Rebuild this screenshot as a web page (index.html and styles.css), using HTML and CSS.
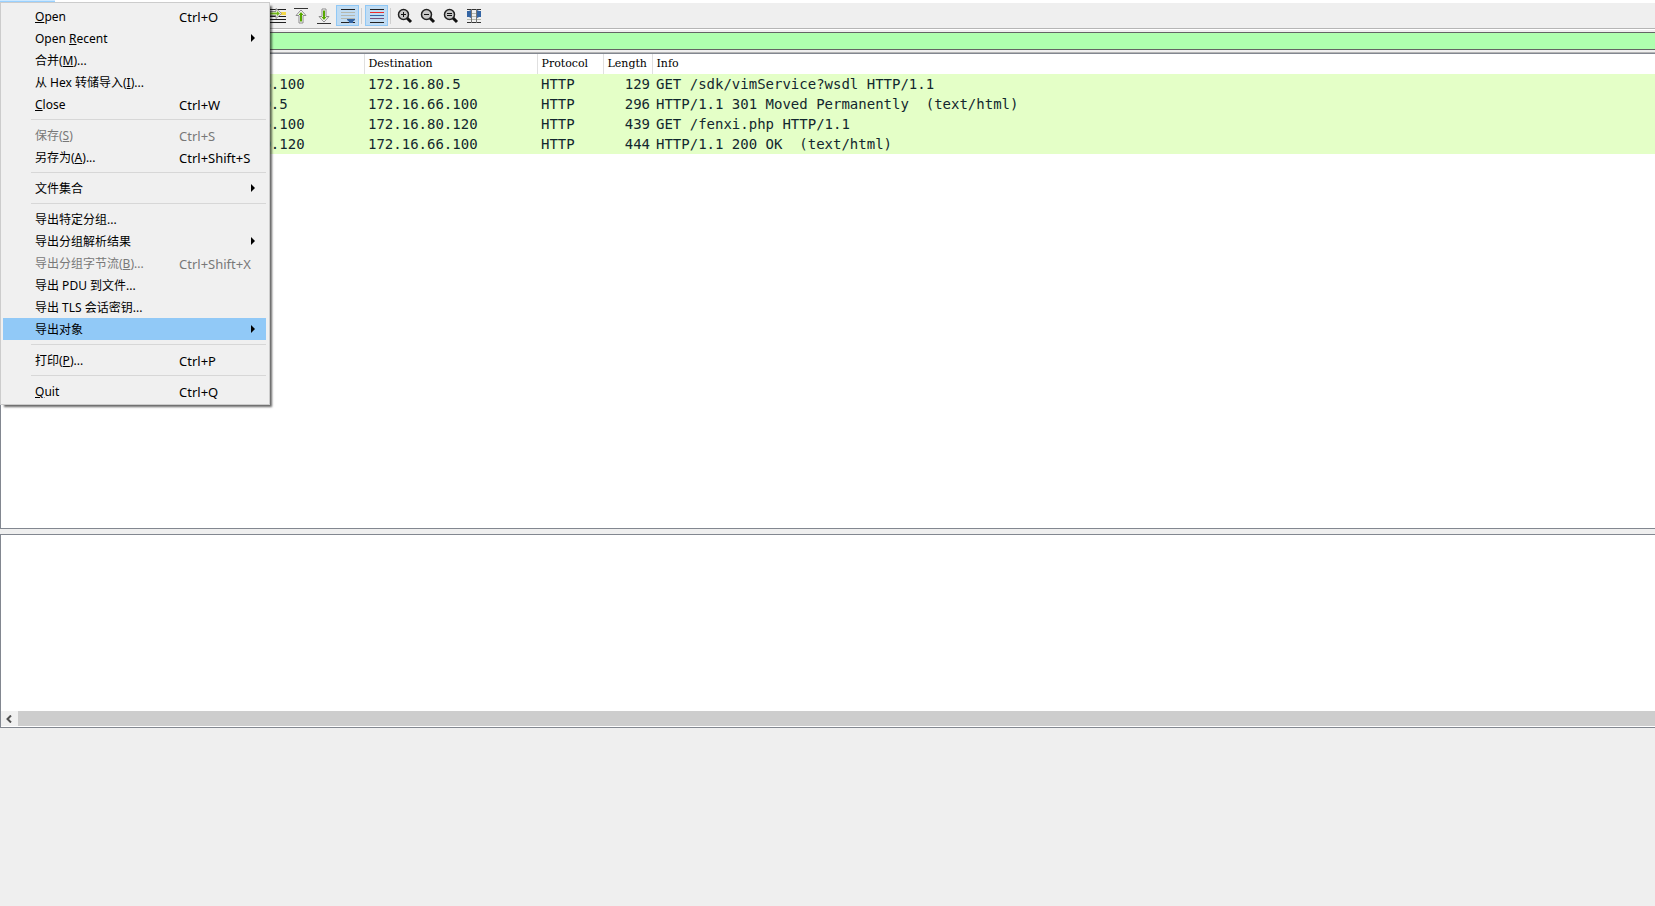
FILE: index.html
```
<!DOCTYPE html>
<html lang="zh-CN">
<head>
    <meta charset="UTF-8">
    <meta name="viewport" content="width=device-width, initial-scale=1.0">
    <title>Packet Capture</title>
    <link rel="stylesheet" href="styles.css">
</head>
<body>
    <header class="menubar">
        <button class="menubar-item" type="button" aria-label="File"></button>
    </header>

    <div class="toolbar">
        <button class="tool" type="button" aria-label="Go to packet">
            <svg width="16" height="16" viewBox="0 0 16 16"><path d="M0 1.500h16M0 11.500h16M0 14.500h16" stroke="#222"/><path d="M10 5.500h6" stroke="#f5d94a" stroke-width="3"/><path d="M0 8.500h16" stroke="#222"/><path d="M0 3.500h6V.5L11.500 5.500 6 10.500v-3H0z" fill="#fff" stroke="#8b8b8b"/><path d="M0 4.500h7V3l3 2.500L7 8V6.500H0z" fill="#73b71b"/></svg>
        </button>
        <button class="tool" type="button" aria-label="First packet">
            <svg width="16" height="16" viewBox="0 0 16 16"><path d="M1 .5h14" stroke="#333"/><path d="M8 2l5 5.500h-3V15H6V7.500H3z" fill="#fff" stroke="#8b8b8b"/><path d="M8 4l2.500 3H9v6.500H7V7H5.500z" fill="#57a800"/></svg>
        </button>
        <button class="tool" type="button" aria-label="Last packet">
            <svg width="16" height="16" viewBox="0 0 16 16"><path d="M1 15.500h14" stroke="#333"/><path d="M8 14l5-5.500h-3V1H6v7.500H3z" fill="#fff" stroke="#8b8b8b"/><path d="M8 12l2.500-3H9V2.500H7V9H5.500z" fill="#57a800"/></svg>
        </button>
        <button class="tool active" type="button" aria-label="Auto scroll">
            <svg width="16" height="16" viewBox="0 0 16 16"><path d="M1 1.500h14M1 14.500h14" stroke="#222"/><path d="M1 4.500h14M1 7.500h14M1 10.500h14" stroke="#b5b8ae"/><path d="M7 11h8v1l-2 1.500V15H9v-1.500L7 12z" fill="#3465a4"/></svg>
        </button>
        <span class="tool-divider"></span>
        <button class="tool active" type="button" aria-label="Colorize">
            <svg width="16" height="16" viewBox="0 0 16 16"><path d="M1 1.500h14M1 14.500h14" stroke="#222"/><path d="M1 4.500h14" stroke="#ef2929"/><path d="M1 7.500h14" stroke="#3465a4"/><path d="M1 10.500h14" stroke="#75507b"/></svg>
        </button>
        <span class="tool-divider"></span>
        <button class="tool" type="button" aria-label="Zoom in">
            <svg width="16" height="16" viewBox="0 0 16 16"><path d="M10 10l4 4" stroke="#111" stroke-width="3"/><circle cx="6.500" cy="6.500" r="5" fill="#c8c8c8" stroke="#222" stroke-width="1.500"/><path d="M4 6.500h5M6.500 4v5" stroke="#111"/></svg>
        </button>
        <button class="tool" type="button" aria-label="Zoom out">
            <svg width="16" height="16" viewBox="0 0 16 16"><path d="M10 10l4 4" stroke="#111" stroke-width="3"/><circle cx="6.500" cy="6.500" r="5" fill="#c8c8c8" stroke="#222" stroke-width="1.500"/><path d="M4 6.500h5" stroke="#111"/></svg>
        </button>
        <button class="tool" type="button" aria-label="Normal size">
            <svg width="16" height="16" viewBox="0 0 16 16"><path d="M10 10l4 4" stroke="#111" stroke-width="3"/><circle cx="6.500" cy="6.500" r="5" fill="#c8c8c8" stroke="#222" stroke-width="1.500"/><path d="M4 5.500h5M4 7.500h5" stroke="#111"/></svg>
        </button>
        <button class="tool" type="button" aria-label="Resize columns">
            <svg width="16" height="16" viewBox="0 0 16 16"><path d="M1 1.500h14M1 14.500h14" stroke="#333"/><path d="M1 5.500h14M1 8.500h14M1 11.500h14" stroke="#b5b8ae"/><path d="M5.500 1v14M10.500 1v14" stroke="#777"/><path d="M1 3h2l2-1v8L3 9H1zM15 3h-2l-2-1v8l2-1h2z" fill="#3465a4"/></svg>
        </button>
    </div>

    <div class="filter">
        <input class="filter-input" type="text" value="" aria-label="Display filter">
    </div>

    <main class="panes">
        <section class="packet-list">
            <table class="packets">
                <colgroup>
                    <col class="col-number">
                    <col class="col-time">
                    <col class="col-address">
                    <col class="col-address">
                    <col class="col-protocol">
                    <col class="col-length">
                    <col>
                </colgroup>
                <thead>
                    <tr><th></th><th></th><th></th><th>Destination</th><th>Protocol</th><th>Length</th><th>Info</th></tr>
                </thead>
                <tbody>
                    <tr><td></td><td></td><td>172.16.66.100</td><td>172.16.80.5</td><td>HTTP</td><td class="number">129</td><td>GET /sdk/vimService?wsdl HTTP/1.1</td></tr>
                    <tr><td></td><td></td><td>172.16.80.5</td><td>172.16.66.100</td><td>HTTP</td><td class="number">296</td><td>HTTP/1.1 301 Moved Permanently  (text/html)</td></tr>
                    <tr><td></td><td></td><td>172.16.66.100</td><td>172.16.80.120</td><td>HTTP</td><td class="number">439</td><td>GET /fenxi.php HTTP/1.1</td></tr>
                    <tr><td></td><td></td><td>172.16.80.120</td><td>172.16.66.100</td><td>HTTP</td><td class="number">444</td><td>HTTP/1.1 200 OK  (text/html)</td></tr>
                </tbody>
            </table>
        </section>
        <section class="packet-details">
            <div class="scrollbar">
                <button class="scroll-left" type="button" aria-label="Scroll left">
                    <svg width="6" height="8" viewBox="0 0 6 8"><path d="M5 .5L1.500 4 5 7.500" fill="none" stroke="#505050" stroke-width="2"/></svg>
                </button>
                <div class="scroll-thumb"></div>
            </div>
        </section>
        <section class="packet-bytes"></section>
    </main>

    <nav class="file-menu">
        <button class="menu-item" type="button"><span><u>O</u>pen</span><kbd>Ctrl+O</kbd></button>
        <button class="menu-item submenu" type="button"><span>Open <u>R</u>ecent</span></button>
        <button class="menu-item" type="button"><span>合并(<u>M</u>)...</span></button>
        <button class="menu-item" type="button"><span>从 Hex 转储导入(<u>I</u>)...</span></button>
        <button class="menu-item" type="button"><span><u>C</u>lose</span><kbd>Ctrl+W</kbd></button>
        <hr>
        <button class="menu-item" type="button" disabled><span>保存(<u>S</u>)</span><kbd>Ctrl+S</kbd></button>
        <button class="menu-item" type="button"><span>另存为(<u>A</u>)...</span><kbd>Ctrl+Shift+S</kbd></button>
        <hr>
        <button class="menu-item submenu" type="button"><span>文件集合</span></button>
        <hr>
        <button class="menu-item" type="button"><span>导出特定分组...</span></button>
        <button class="menu-item submenu" type="button"><span>导出分组解析结果</span></button>
        <button class="menu-item" type="button" disabled><span>导出分组字节流(<u>B</u>)...</span><kbd>Ctrl+Shift+X</kbd></button>
        <button class="menu-item" type="button"><span>导出 PDU 到文件...</span></button>
        <button class="menu-item" type="button"><span>导出 TLS 会话密钥...</span></button>
        <button class="menu-item submenu selected" type="button"><span>导出对象</span></button>
        <hr>
        <button class="menu-item" type="button"><span>打印(<u>P</u>)...</span><kbd>Ctrl+P</kbd></button>
        <hr>
        <button class="menu-item" type="button"><span><u>Q</u>uit</span><kbd>Ctrl+Q</kbd></button>
    </nav>
</body>
</html>
```
FILE: styles.css
```
* {
    box-sizing: border-box;
}

body {
    margin: 0;
    min-height: 100vh;
    display: flex;
    flex-direction: column;
    background-color: #efefef;
    font-family: "Noto Sans", "Noto Sans CJK SC", sans-serif;
    font-size: 12px;
    color: #000;
}

button {
    padding: 0;
    border: none;
    background: none;
    font: inherit;
    color: inherit;
}

.menubar {
    display: flex;
    height: 3px;
    background-color: #fff;
}

.menubar-item {
    width: 55px;
    height: 2px;
    background-color: #cce8ff;
    border-bottom: 1px solid #99d1ff;
}

/* toolbar */
.toolbar {
    display: flex;
    align-items: center;
    height: 26px;
    padding-left: 267px;
    border-bottom: 1px solid #b5b5b5;
}

.tool {
    display: flex;
    align-items: center;
    justify-content: center;
    width: 23px;
    height: 21px;
    padding-right: 1px;
}

.tool.active {
    padding-right: 0;
    background-color: #c0dcf3;
    border: 1px solid #90c8f6;
}

.tool-divider {
    width: 1px;
    height: 16px;
    margin: 0 3px 0 2px;
    background-color: #d0d0d0;
}

.filter {
    padding: 2px 0;
    border-top: 1px solid #fff;
    border-bottom: 1px solid #b5b5b5;
}

.filter-input {
    display: block;
    width: 100%;
    height: 18px;
    border: solid #646464;
    border-width: 1px 0;
    background-color: #afffaf;
}

/* panes */
.panes {
    flex: 1;
    display: grid;
    grid-template-rows: 476px 194px 1fr;
    row-gap: 5px;
}

.packet-list,
.packet-details {
    border: solid #828790;
    border-width: 1px 0 1px 1px;
    background-color: #fff;
}

.packets {
    width: 100%;
    table-layout: fixed;
    border-collapse: collapse;
}

.col-number {
    width: 60px;
}

.col-time {
    width: 130px;
}

.col-address {
    width: 173px;
}

.col-protocol {
    width: 66px;
}

.col-length {
    width: 49px;
}

.packets th {
    height: 20px;
    padding: 0 4px;
    border-right: 1px solid #e0e0e0;
    font-family: "DejaVu Serif", serif;
    font-size: 11px;
    font-weight: normal;
    line-height: 16px;
    text-align: left;
}

.packets th:last-child {
    border-right: none;
}

.packets td {
    height: 20px;
    padding: 0 4px;
    background-color: #e4ffc7;
    color: #12272e;
    font-family: "DejaVu Sans Mono", monospace;
    font-size: 14px;
    line-height: 18px;
    white-space: pre;
}

.packets .number {
    padding-right: 2px;
    text-align: right;
}

.packet-details {
    display: flex;
    flex-direction: column;
    justify-content: flex-end;
    padding-bottom: 1px;
}

.scrollbar {
    display: flex;
    height: 15px;
    background-color: #f0f0f0;
}

.scroll-left {
    display: flex;
    align-items: center;
    justify-content: center;
    width: 17px;
    padding-right: 2px;
}

.scroll-thumb {
    flex: 1;
    background-color: #cdcdcd;
}

/* opened file menu */
.file-menu {
    position: absolute;
    top: 2px;
    left: 0;
    width: 270px;
    padding: 2px 3px 2px 2px;
    border: 1px solid #ccc;
    background-color: #f0f0f0;
    box-shadow: 3px 3px 2px -1px rgba(0, 0, 0, 0.6);
}

.menu-item {
    display: grid;
    grid-template-columns: 144px 1fr;
    align-items: center;
    width: 100%;
    height: 22px;
    padding: 2px 0 0 32px;
    line-height: 20px;
    text-align: left;
    white-space: nowrap;
}

.menu-item kbd {
    font-family: inherit;
    font-size: 13px;
}

.menu-item:disabled {
    color: #787878;
}

.menu-item.selected {
    background-color: #91c9f7;
}

.submenu {
    grid-template-columns: 1fr 15px;
}

.submenu::after {
    content: "";
    width: 4px;
    margin-bottom: 2px;
    border: solid transparent;
    border-width: 4px 0 4px 4px;
    border-left-color: #000;
}

.file-menu hr {
    height: 1px;
    margin: 4px 0 4px 28px;
    border: none;
    background-color: #d7d7d7;
}
```
